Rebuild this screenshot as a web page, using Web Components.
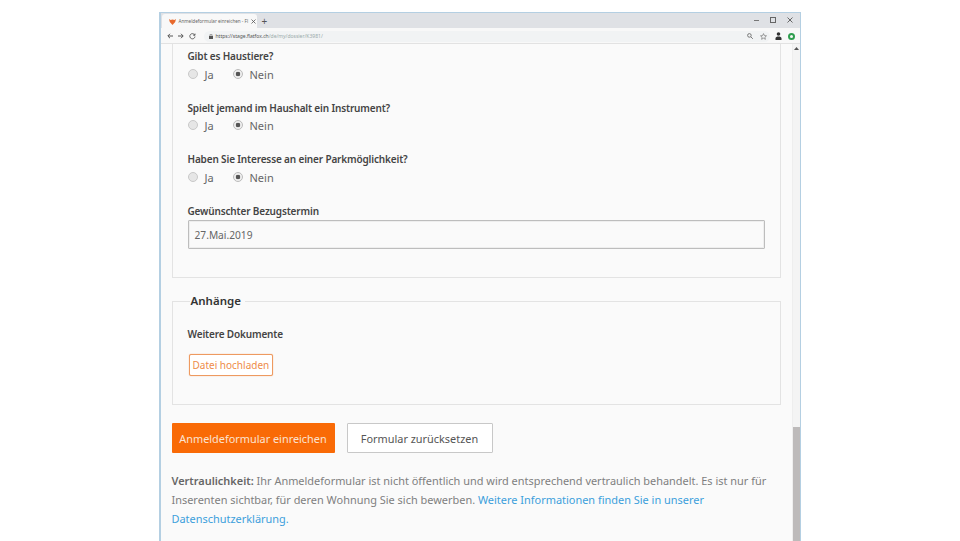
<!DOCTYPE html>
<html lang="de">
<head>
<meta charset="utf-8">
<title>Anmeldeformular einreichen</title>
<style>
  html, body { margin: 0; height: 100%; background: #ffffff; overflow: hidden; }
  body { font-family: "Noto Sans", "Open Sans", sans-serif; color: #444; display: flex; justify-content: center; }
</style>
</head>
<body>
<browser-window>
  <form-panel class="first">
    <radio-question label="Gibt es Haustiere?"></radio-question>
    <radio-question label="Spielt jemand im Haushalt ein Instrument?"></radio-question>
    <radio-question label="Haben Sie Interesse an einer Parkmöglichkeit?"></radio-question>
    <date-field label="Gewünschter Bezugstermin" value="27.Mai.2019"></date-field>
  </form-panel>
  <form-panel legend="Anhänge">
    <upload-field label="Weitere Dokumente" action="Datei hochladen"></upload-field>
  </form-panel>
  <form-actions></form-actions>
  <privacy-note></privacy-note>
</browser-window>

<script>
/******************** Browser frame ********************/
class BrowserWindow extends HTMLElement {
  constructor(){
    super();
    this.attachShadow({mode: 'open'});
    this.shadowRoot.innerHTML = `
    <style>
      :host {
        display: flex;
        flex-direction: column;
        width: 642px;
        height: 529px;
        margin: 12px 0 0 -1px;
        box-sizing: border-box;
        border: solid #b4cfe2;
        border-width: 1px 1px 0 2px;
        background: #fafafa;
        overflow: hidden;
      }
      .tabs {
        display: flex;
        align-items: flex-end;
        height: 15px;
        flex: none;
        background: #dfe1e5;
        color: #666;
      }
      .tab {
        display: flex;
        align-items: center;
        gap: 3px;
        width: 95px;
        height: 14px;
        box-sizing: border-box;
        padding: 0 4px 0 7px;
        margin-left: 1px;
        background: #f8f8f8;
        border-radius: 3px 3px 0 0;
        font-size: 4.600px;
        white-space: nowrap;
      }
      .tab span { flex: 1; }
      .plus { margin: 0 0 1px 5px; font-size: 10px; line-height: 12px; color: #555; }
      .win {
        display: flex;
        align-items: center;
        gap: 11px;
        margin: 0 7px 5px auto;
      }
      .bar {
        display: flex;
        align-items: center;
        gap: 5px;
        height: 14px;
        padding: 1px 5px 0 6px;
        flex: none;
        background: #f8f8f8;
        border-bottom: 1px solid #e2e2e2;
      }
      .url {
        flex: 1;
        display: flex;
        align-items: center;
        gap: 3px;
        height: 11px;
        margin-left: 3px;
        padding: 0 3px 0 5px;
        border-radius: 6px;
        background: #f1f3f4;
        font-size: 5px;
        color: #9aa;
        white-space: nowrap;
      }
      .url b { font-weight: 400; color: #555; }
      .url span { flex: 1; }
      .tools { display: flex; align-items: center; gap: 7px; }
      .tools.user { gap: 6px; }
      svg { display: block; flex: none; }
      .view { flex: 1; display: flex; min-height: 0; }
      .content {
        flex: 1;
        min-width: 0;
        padding: 0 11px 0 11px;
        display: flex;
        flex-direction: column;
      }
      .scroll {
        width: 8px;
        flex: none;
        display: flex;
        flex-direction: column;
        background: #f4f4f4;
        border-left: 1px solid #eee;
        box-sizing: border-box;
      }
      .arrow { display: flex; justify-content: center; padding-top: 3px; height: 12px; box-sizing: border-box; }
      .track { flex: 1; }
      .thumb { height: 114px; background: #bdbaba; }
    </style>
    <div class="tabs">
      <div class="tab">
        <svg width="7" height="7" viewBox="0 0 7 7"><path d="M0 1l1.6 1L3.5 1.400 5.400 2 7 1 6.200 4 3.500 7 .8 4z" fill="#e8692c"/></svg>
        <span>Anmeldeformular einreichen - Fl</span>
        <svg width="5" height="5" viewBox="0 0 5 5"><path d="M.5.500l4 4M4.500.500l-4 4" stroke="#555" stroke-width=".8"/></svg>
      </div>
      <div class="plus">+</div>
      <div class="win">
        <svg width="5" height="5" viewBox="0 0 5 5"><path d="M0 2.500h5" stroke="#777"/></svg>
        <svg width="6" height="6" viewBox="0 0 6 6"><rect x=".5" y=".5" width="5" height="5" fill="none" stroke="#666"/></svg>
        <svg width="6" height="6" viewBox="0 0 6 6"><path d="M.5.500l5 5M5.500.500l-5 5" stroke="#666"/></svg>
      </div>
    </div>
    <div class="bar">
      <svg width="6" height="6" viewBox="0 0 6 6"><path d="M6 3H1M3 .8L.8 3 3 5.200" fill="none" stroke="#555"/></svg>
      <svg width="6" height="6" viewBox="0 0 6 6"><path d="M0 3h5M3 .8L5.200 3 3 5.200" fill="none" stroke="#555"/></svg>
      <svg width="7" height="7" viewBox="0 0 7 7"><path d="M5.700 2A2.600 2.600 0 1 0 6 3.500M6 .6v1.700H4.300" fill="none" stroke="#555" stroke-width=".9"/></svg>
      <div class="url">
        <svg width="4" height="5" viewBox="0 0 4 5"><rect y="2" width="4" height="3" fill="#555"/><path d="M1 2V1a1 1 0 0 1 2 0v1" fill="none" stroke="#555" stroke-width=".6"/></svg>
        <span><b>https://stage.flatfox.ch</b>/de/my/dossier/K3981/</span>
        <div class="tools">
          <svg width="6" height="6" viewBox="0 0 6 6"><circle cx="2.400" cy="2.400" r="1.800" fill="none" stroke="#777"/><path d="M3.800 3.800L5.800 5.800" stroke="#777"/></svg>
          <svg width="7" height="7" viewBox="0 0 7 7"><path d="M3.500.6l.9 2 2.100.2-1.600 1.400.5 2.100-1.900-1.100-1.900 1.100.5-2.100L.5 2.800l2.100-.2z" fill="none" stroke="#777" stroke-width=".7"/></svg>
        </div>
      </div>
      <div class="tools user">
        <svg width="7" height="8" viewBox="0 0 7 8"><circle cx="3.500" cy="2" r="1.800" fill="#333"/><path d="M.5 8V6.500C.5 5 2 4.500 3.500 4.500S6.500 5 6.500 6.500V8z" fill="#333"/></svg>
        <svg width="7" height="7" viewBox="0 0 7 7"><circle cx="3.500" cy="3.500" r="2.500" fill="none" stroke="#2f9e4f" stroke-width="2"/></svg>
      </div>
    </div>
    <div class="view">
      <div class="content"><slot></slot></div>
      <div class="scroll">
        <div class="arrow"><svg width="5" height="3" viewBox="0 0 5 3"><path d="M2.500 0L5 3H0z" fill="#555"/></svg></div>
        <div class="track"></div>
        <div class="thumb"></div>
      </div>
    </div>
    `;
  }
}

/******************** Fieldset panel ********************/
class FormPanel extends HTMLElement {
  constructor(){
    super();
    this.attachShadow({mode: 'open'});
  }

  connectedCallback(){
    const legend = this.getAttribute('legend');
    this.shadowRoot.innerHTML = `
    <style>
      :host { display: block; flex: none; }
      :host(.first) { margin-bottom: 14px; }
      fieldset {
        margin: 0;
        padding: 0 15px;
        border: 1px solid #e3e3e3;
        min-width: 0;
      }
      :host(.first) fieldset { border-top: 0; padding-bottom: 28px; }
      :host(:not(.first)) fieldset { padding-bottom: 28px; }
      legend {
        margin-left: 2px;
        padding: 0 0 0 1px;
        width: 54px;
        font-size: 11.500px;
        font-weight: 600;
        line-height: 18px;
        color: #333;
      }
    </style>
    <fieldset>
      ${legend ? `<legend>${legend}</legend>` : ''}
      <slot></slot>
    </fieldset>
    `;
  }
}

/******************** Ja / Nein question ********************/
class RadioQuestion extends HTMLElement {
  constructor(){
    super();
    this.attachShadow({mode: 'open'});
  }

  connectedCallback(){
    this.shadowRoot.innerHTML = `
    <style>
      :host { display: block; height: 51.7px; padding-top: 5px; box-sizing: border-box; }
      .label { font-size: 10px; letter-spacing: -0.15px; font-weight: 600; line-height: 14px; color: #444; }
      .row { display: flex; align-items: center; margin-top: 1px; height: 20px; font-size: 11px; color: #666; }
      .opt { display: flex; align-items: center; gap: 7px; }
      .opt.yes { width: 45px; }
      i {
        display: block;
        width: 10px;
        height: 10px;
        box-sizing: border-box;
        border-radius: 50%;
        border: 1px solid #c9c9c9;
        background: #e6e6e6;
        margin-top: -1px;
      }
      i.on { background: radial-gradient(circle, #555 0 2px, #eee 2.600px); border-color: #bbb; }
    </style>
    <div class="label">${this.getAttribute('label')}</div>
    <div class="row">
      <div class="opt yes"><i></i><span>Ja</span></div>
      <div class="opt"><i class="on"></i><span>Nein</span></div>
    </div>
    `;
  }
}

/******************** Date input ********************/
class DateField extends HTMLElement {
  constructor(){
    super();
    this.attachShadow({mode: 'open'});
  }

  connectedCallback(){
    this.shadowRoot.innerHTML = `
    <style>
      :host { display: block; margin-top: 5px; }
      .label { font-size: 10px; letter-spacing: -0.15px; font-weight: 600; line-height: 14px; color: #444; }
      .input {
        display: flex;
        align-items: center;
        height: 29px;
        margin-top: 2px;
        padding: 0 6px;
        box-sizing: border-box;
        border: 1px solid #bdbdbd;
        box-shadow: inset 0 0 0 1px #eee;
        border-radius: 1px;
        font-size: 10.200px;
        color: #666;
      }
    </style>
    <div class="label">${this.getAttribute('label')}</div>
    <div class="input">${this.getAttribute('value')}</div>
    `;
  }
}

/******************** File upload ********************/
class UploadField extends HTMLElement {
  constructor(){
    super();
    this.attachShadow({mode: 'open'});
  }

  connectedCallback(){
    this.shadowRoot.innerHTML = `
    <style>
      :host { display: block; padding-top: 17px; }
      .label { font-size: 10px; letter-spacing: -0.15px; font-weight: 600; line-height: 14px; color: #444; }
      .btn {
        display: flex;
        width: max-content;
        align-items: center;
        height: 22px;
        margin: 13px 0 0 1px;
        padding: 0 3px;
        box-sizing: border-box;
        border: 1px solid #ee9a60;
        box-shadow: 0 0 1px #ee9a60;
        border-radius: 2px;
        background: #fff;
        font-size: 10px;
        color: #ee8c4a;
      }
    </style>
    <div class="label">${this.getAttribute('label')}</div>
    <div class="btn">${this.getAttribute('action')}</div>
    `;
  }
}

/******************** Submit / reset ********************/
class FormActions extends HTMLElement {
  constructor(){
    super();
    this.attachShadow({mode: 'open'});
    this.shadowRoot.innerHTML = `
    <style>
      :host { display: flex; flex: none; gap: 12px; margin-top: 18px; font-size: 10.900px; }
      div {
        display: flex;
        align-items: center;
        justify-content: center;
        height: 30px;
        box-sizing: border-box;
        border-radius: 1px;
      }
      .primary { width: 163px; background: #f96a06; color: #fbe3d2; }
      .secondary { width: 146px; background: #fff; border: 1px solid #c8c8c8; color: #555; }
    </style>
    <div class="primary">Anmeldeformular einreichen</div>
    <div class="secondary">Formular zurücksetzen</div>
    `;
  }
}

/******************** Privacy text ********************/
class PrivacyNote extends HTMLElement {
  constructor(){
    super();
    this.attachShadow({mode: 'open'});
    this.shadowRoot.innerHTML = `
    <style>
      :host { display: block; flex: none; margin-top: 18px; font-size: 10.950px; line-height: 19px; color: #7f7f7f; }
      b { font-weight: 600; color: #666; }
      a { color: #3c9fdc; text-decoration: none; }
    </style>
    <b>Vertraulichkeit:</b> Ihr Anmeldeformular ist nicht öffentlich und wird entsprechend vertraulich behandelt. Es ist nur für Inserenten sichtbar, für deren Wohnung Sie sich bewerben. <a href="#">Weitere Informationen finden Sie in unserer Datenschutzerklärung.</a>
    `;
  }
}

window.customElements.define('browser-window', BrowserWindow);
window.customElements.define('form-panel', FormPanel);
window.customElements.define('radio-question', RadioQuestion);
window.customElements.define('date-field', DateField);
window.customElements.define('upload-field', UploadField);
window.customElements.define('form-actions', FormActions);
window.customElements.define('privacy-note', PrivacyNote);
</script>
</body>
</html>
